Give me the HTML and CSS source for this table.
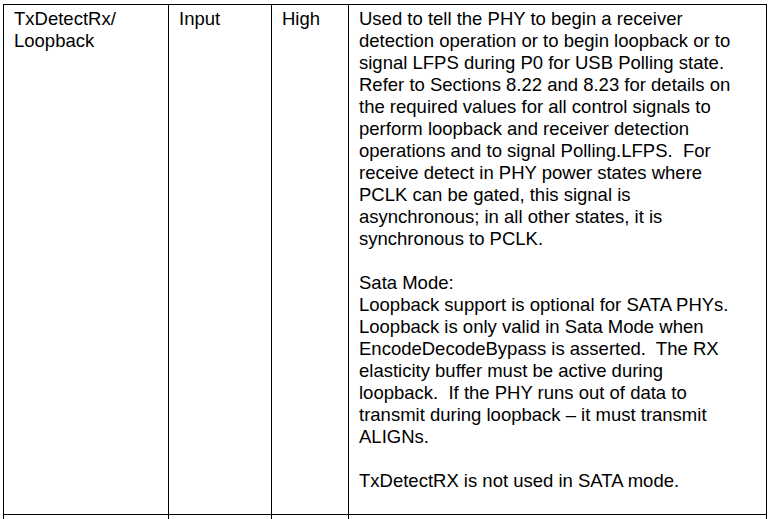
FILE: index.html
```html
<!DOCTYPE html>
<html>
<head>
<meta charset="utf-8">
<link rel="stylesheet" href="styles.css">
</head>
<body>
<table class="sig">
  <colgroup>
    <col class="c-name">
    <col class="c-dir">
    <col class="c-act">
    <col class="c-desc">
  </colgroup>
  <tr>
    <td>TxDetectRx/<br>Loopback</td>
    <td>Input</td>
    <td>High</td>
    <td>Used to tell the PHY to begin a receiver<br>detection operation or to begin loopback or to<br>signal LFPS during P0 for USB Polling state.<br>Refer to Sections 8.22 and 8.23 for details on<br>the required values for all control signals to<br>perform loopback and receiver detection<br>operations and to signal Polling.LFPS.&nbsp; For<br>receive detect in PHY power states where<br>PCLK can be gated, this signal is<br>asynchronous; in all other states, it is<br>synchronous to PCLK.<br><br>Sata Mode:<br>Loopback support is optional for SATA PHYs.<br>Loopback is only valid in Sata Mode when<br>EncodeDecodeBypass is asserted.&nbsp; The RX<br>elasticity buffer must be active during<br>loopback.&nbsp; If the PHY runs out of data to<br>transmit during loopback – it must transmit<br>ALIGNs.<br><br>TxDetectRX is not used in SATA mode.<br>&nbsp;</td>
  </tr>
  <tr>
    <td>TxElecIdle</td>
    <td>Input</td>
    <td>High</td>
    <td>Forces Tx output to electrical idle when</td>
  </tr>
</table>
</body>
</html>
```

FILE: styles.css
```css
html, body {
  margin: 0;
  padding: 0;
  background: #ffffff;
}
body {
  padding: 4px 0 0 3px;
  font-family: "Liberation Sans", Arial, sans-serif;
  font-size: 18.5px;
  line-height: 22px;
  color: #000;
}
.sig {
  border-collapse: collapse;
  table-layout: fixed;
  width: 763px;
}
.c-name { width: 165px; }
.c-dir { width: 103px; }
.c-act { width: 77px; }
.c-desc { width: 418px; }
.sig td {
  border: 1.5px solid #000;
  vertical-align: top;
  padding: 3px 4px 0 10px;
  white-space: nowrap;
}
```
